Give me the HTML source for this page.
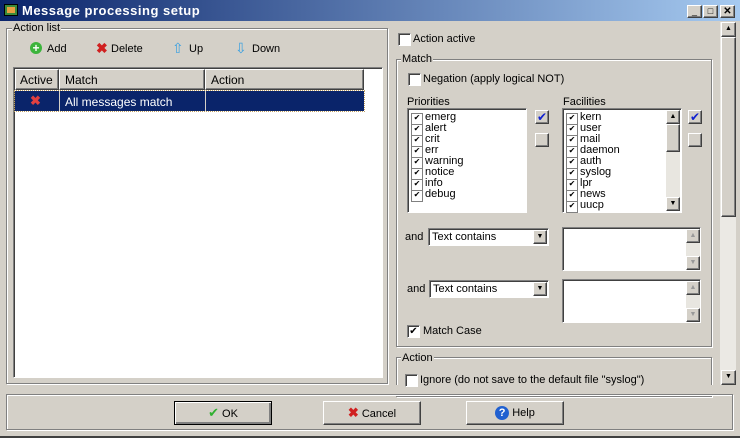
<!DOCTYPE html>
<html><head><style>
*{box-sizing:border-box;margin:0;padding:0}
body{width:740px;height:438px;background:#d4d0c8;font-family:"Liberation Sans",sans-serif;font-size:11px;color:#000;position:relative;overflow:hidden}
.a{position:absolute}
.title{left:0;top:0;width:740px;height:21px;background:linear-gradient(90deg,#0a246a,#a6caf0);color:#fff;font-weight:bold;font-size:13px;line-height:21px;padding-left:22px;letter-spacing:.5px}
.grp{border:1px solid #808080;box-shadow:1px 1px 0 #fff inset,1px 1px 0 #fff}
.lbl{background:#d4d0c8;padding:0 1px;line-height:12px}
.sunk{background:#fff;border:1px solid;border-color:#808080 #fff #fff #808080;box-shadow:inset 1px 1px 0 #404040}
.cb{width:13px;height:13px;background:#fff;border:1px solid;border-color:#808080 #fff #fff #808080;box-shadow:inset 1px 1px 0 #404040}
.btn{background:#d4d0c8;border:1px solid;border-color:#fff #404040 #404040 #fff;box-shadow:inset -1px -1px 0 #808080;text-align:center}
.li{position:absolute;left:3px;height:11px;line-height:11px;padding-left:14px}
.li:before{content:"✔";position:absolute;left:0;top:1px;width:10px;height:10px;border:1px solid #808080;font-size:8px;line-height:8px;text-align:center;background:#fff}
.sb{background:#e8e6e0}
.arr{width:14px;height:14px;font-size:7px;line-height:12px}
</style></head><body>
<div class="a title">Message processing setup</div>
<div class="a" style="left:4px;top:4px;width:14px;height:12px;background:#3a8a3a;border:1px solid #000"><div style="margin:2px;height:6px;background:#e8a040"></div></div>
<div class="a btn" style="left:687px;top:5px;width:15px;height:13px;font-size:9px;line-height:11px">_</div>
<div class="a btn" style="left:703px;top:5px;width:15px;height:13px;font-size:9px;line-height:11px">□</div>
<div class="a btn" style="left:720px;top:5px;width:15px;height:13px;font-size:10px;line-height:11px;font-weight:bold">✕</div>

<div class="a grp" style="left:6px;top:28px;width:382px;height:356px"></div>
<div class="a lbl" style="left:12px;top:22px">Action list</div>
<div class="a" style="left:30px;top:42px;width:12px;height:12px;border-radius:50%;background:#3cb43c;color:#fff;font-weight:bold;font-size:12px;line-height:12px;text-align:center">+</div>
<div class="a" style="left:47px;top:43px">Add</div>
<div class="a" style="left:96px;top:40px;color:#d02020;font-weight:bold;font-size:14px">✖</div>
<div class="a" style="left:111px;top:43px">Delete</div>
<div class="a" style="left:172px;top:40px;color:#3aa0e0;font-size:14px">⇧</div>
<div class="a" style="left:189px;top:43px">Up</div>
<div class="a" style="left:235px;top:40px;color:#3aa0e0;font-size:14px">⇩</div>
<div class="a" style="left:252px;top:43px">Down</div>

<div class="a sunk" style="left:13px;top:67px;width:370px;height:311px"></div>
<div class="a btn" style="left:15px;top:69px;width:44px;height:21px;text-align:left;padding:3px 4px;font-size:12px">Active</div>
<div class="a btn" style="left:59px;top:69px;width:146px;height:21px;text-align:left;padding:3px 5px;font-size:12px">Match</div>
<div class="a btn" style="left:205px;top:69px;width:159px;height:21px;text-align:left;padding:3px 5px;font-size:12px">Action</div>
<div class="a" style="left:15px;top:91px;width:349px;height:20px;background:#0a246a;outline:1px dotted #c0a060"></div>
<div class="a" style="left:30px;top:93px;color:#e04040;font-weight:bold;font-size:13px">✖</div>
<div class="a" style="left:59px;top:91px;width:1px;height:20px;background:#d4d0c8"></div>
<div class="a" style="left:205px;top:91px;width:1px;height:20px;background:#d4d0c8"></div>
<div class="a" style="left:65px;top:95px;color:#fff;font-size:12px">All messages match</div>

<!-- right -->
<div class="a cb" style="left:398px;top:33px"></div>
<div class="a" style="left:413px;top:33px">Action active</div>
<div class="a grp" style="left:396px;top:59px;width:316px;height:288px"></div>
<div class="a lbl" style="left:401px;top:53px">Match</div>
<div class="a cb" style="left:408px;top:73px"></div>
<div class="a" style="left:423px;top:73px">Negation (apply logical NOT)</div>
<div class="a" style="left:407px;top:96px">Priorities</div>
<div class="a" style="left:563px;top:96px">Facilities</div>
<div class="a sunk" style="left:407px;top:108px;width:120px;height:105px">
<div class="li" style="top:3px">emerg</div><div class="li" style="top:14px">alert</div><div class="li" style="top:25px">crit</div><div class="li" style="top:36px">err</div><div class="li" style="top:47px">warning</div><div class="li" style="top:58px">notice</div><div class="li" style="top:69px">info</div><div class="li" style="top:80px">debug</div>
</div>
<div class="a sunk" style="left:562px;top:108px;width:120px;height:105px">
<div class="li" style="top:3px">kern</div><div class="li" style="top:14px">user</div><div class="li" style="top:25px">mail</div><div class="li" style="top:36px">daemon</div><div class="li" style="top:47px">auth</div><div class="li" style="top:58px">syslog</div><div class="li" style="top:69px">lpr</div><div class="li" style="top:80px">news</div><div class="li" style="top:91px">uucp</div>
</div>
<div class="a sb" style="left:666px;top:110px;width:14px;height:101px"></div>
<div class="a btn arr" style="left:666px;top:110px">▲</div>
<div class="a btn" style="left:666px;top:124px;width:14px;height:28px"></div>
<div class="a btn arr" style="left:666px;top:197px">▼</div>
<div class="a btn" style="left:535px;top:110px;width:14px;height:14px;color:#1020d0;font-size:12px;line-height:12px">✔</div>
<div class="a btn" style="left:535px;top:133px;width:14px;height:14px"></div>
<div class="a btn" style="left:688px;top:110px;width:14px;height:14px;color:#1020d0;font-size:12px;line-height:12px">✔</div>
<div class="a btn" style="left:688px;top:133px;width:14px;height:14px"></div>

<div class="a" style="left:405px;top:231px">and</div>
<div class="a sunk" style="left:428px;top:228px;width:121px;height:18px;padding:2px 3px">Text contains</div>
<div class="a btn arr" style="left:533px;top:230px">▼</div>
<div class="a sunk" style="left:562px;top:227px;width:139px;height:44px"></div>
<div class="a sb" style="left:686px;top:229px;width:14px;height:41px"></div>
<div class="a btn arr" style="left:686px;top:229px;color:#999">▲</div>
<div class="a btn arr" style="left:686px;top:256px;color:#999">▼</div>

<div class="a" style="left:407px;top:283px">and</div>
<div class="a sunk" style="left:429px;top:280px;width:120px;height:18px;padding:2px 3px">Text contains</div>
<div class="a btn arr" style="left:533px;top:282px">▼</div>
<div class="a sunk" style="left:562px;top:279px;width:139px;height:44px"></div>
<div class="a sb" style="left:686px;top:281px;width:14px;height:41px"></div>
<div class="a btn arr" style="left:686px;top:281px;color:#999">▲</div>
<div class="a btn arr" style="left:686px;top:308px;color:#999">▼</div>

<div class="a cb" style="left:407px;top:325px;font-size:10px;line-height:11px;text-align:center">✔</div>
<div class="a" style="left:423px;top:325px">Match Case</div>

<div class="a grp" style="left:396px;top:357px;width:316px;height:40px"></div>
<div class="a lbl" style="left:401px;top:352px">Action</div>
<div class="a" style="left:392px;top:385px;width:326px;height:10px;background:#d4d0c8"></div>
<div class="a cb" style="left:405px;top:374px"></div>
<div class="a" style="left:420px;top:374px">Ignore (do not save to the default file "syslog")</div>

<div class="a sb" style="left:720px;top:22px;width:16px;height:363px;background:#ebe9e4"></div>
<div class="a btn arr" style="left:721px;top:22px;width:15px;height:15px">▲</div>
<div class="a btn" style="left:721px;top:37px;width:15px;height:180px"></div>
<div class="a btn arr" style="left:721px;top:370px;width:15px;height:15px">▼</div>

<div class="a grp" style="left:6px;top:394px;width:727px;height:36px"></div>
<div class="a btn" style="left:174px;top:401px;width:98px;height:24px;line-height:22px;border-color:#000;box-shadow:inset 1px 1px 0 #fff,inset -2px -2px 0 #808080"><span style="color:#30b030;font-size:13px">✔</span> OK</div>
<div class="a btn" style="left:323px;top:401px;width:98px;height:24px;line-height:22px"><span style="color:#d02020;font-weight:bold;font-size:13px">✖</span> Cancel</div>
<div class="a btn" style="left:466px;top:401px;width:98px;height:24px;line-height:22px"><span style="display:inline-block;width:14px;height:14px;border-radius:50%;background:#2060d0;color:#fff;font-weight:bold;line-height:14px;vertical-align:middle">?</span> Help</div>
<div class="a" style="left:0;top:436px;width:740px;height:2px;background:#404040"></div>
</body></html>
